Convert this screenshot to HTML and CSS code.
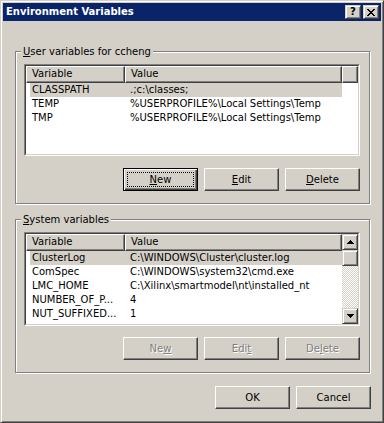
FILE: index.html
```html
<!DOCTYPE html>
<html>
<head>
<meta charset="utf-8">
<title>Environment Variables</title>
<link rel="stylesheet" href="styles.css">
</head>
<body>
<div class="window">
  <div class="titlebar">
    <span class="title">Environment Variables</span>
    <div class="caption-buttons">
      <button class="cbtn help">?</button>
      <button class="cbtn close"><svg width="8" height="7" viewBox="0 0 8 7" shape-rendering="crispEdges"><path d="M0 0h2v1H0zM6 0h2v1H6zM1 1h2v1H1zM5 1h2v1H5zM2 2h4v1H2zM3 3h2v1H3zM2 4h4v1H2zM1 5h2v1H1zM5 5h2v1H5zM0 6h2v1H0zM6 6h2v1H6z" fill="#000"/></svg></button>
    </div>
  </div>
  <div class="content">
    <section class="group g-user">
      <span class="legend"><u>U</u>ser variables for ccheng</span>
      <div class="listview lv-user">
        <div class="lv-inner">
          <div class="lv-main">
            <div class="lv-header">
              <div class="hcell c1">Variable</div>
              <div class="hcell c2">Value</div>
              <div class="hcell filler"></div>
            </div>
            <div class="row selected"><span class="cell c1">CLASSPATH</span><span class="cell c2">.;c:\classes;</span></div>
            <div class="row"><span class="cell c1">TEMP</span><span class="cell c2">%USERPROFILE%\Local Settings\Temp</span></div>
            <div class="row"><span class="cell c1">TMP</span><span class="cell c2">%USERPROFILE%\Local Settings\Temp</span></div>
          </div>
        </div>
      </div>
      <div class="btn-row">
        <button class="btn default"><u>N</u>ew</button>
        <button class="btn"><u>E</u>dit</button>
        <button class="btn"><u>D</u>elete</button>
      </div>
    </section>

    <section class="group g-system">
      <span class="legend"><u>S</u>ystem variables</span>
      <div class="listview lv-system">
        <div class="lv-inner">
          <div class="lv-main">
            <div class="lv-header">
              <div class="hcell c1">Variable</div>
              <div class="hcell c2">Value</div>
            </div>
            <div class="row selected"><span class="cell c1">ClusterLog</span><span class="cell c2">C:\WINDOWS\Cluster\cluster.log</span></div>
            <div class="row"><span class="cell c1">ComSpec</span><span class="cell c2">C:\WINDOWS\system32\cmd.exe</span></div>
            <div class="row"><span class="cell c1">LMC_HOME</span><span class="cell c2">C:\Xilinx\smartmodel\nt\installed_nt</span></div>
            <div class="row"><span class="cell c1">NUMBER_OF_P...</span><span class="cell c2">4</span></div>
            <div class="row"><span class="cell c1">NUT_SUFFIXED...</span><span class="cell c2">1</span></div>
          </div>
          <div class="scrollbar">
            <div class="sb-btn"><svg width="7" height="4" viewBox="0 0 7 4" shape-rendering="crispEdges"><path d="M3 0h1v1H3zM2 1h3v1H2zM1 2h5v1H1zM0 3h7v1H0z" fill="#000"/></svg></div>
            <div class="sb-thumb"></div>
            <div class="sb-track"></div>
            <div class="sb-btn"><svg width="7" height="4" viewBox="0 0 7 4" shape-rendering="crispEdges"><path d="M0 0h7v1H0zM1 1h5v1H1zM2 2h3v1H2zM3 3h1v1H3z" fill="#000"/></svg></div>
          </div>
        </div>
      </div>
      <div class="btn-row sys">
        <button class="btn" disabled>Ne<u>w</u></button>
        <button class="btn" disabled>Edi<u>t</u></button>
        <button class="btn" disabled>De<u>l</u>ete</button>
      </div>
    </section>

    <div class="dlg-buttons">
      <button class="btn">OK</button>
      <button class="btn">Cancel</button>
    </div>
  </div>
</div>
</body>
</html>
```

FILE: styles.css
```css
* { box-sizing: border-box; }
html, body { margin: 0; padding: 0; }
body {
  width: 384px;
  height: 423px;
  overflow: hidden;
  background: #d4d0c8;
  font: 10px "DejaVu Sans", Verdana, sans-serif;
  color: #000;
}
button { font: inherit; color: inherit; margin: 0; }

.window {
  width: 384px;
  height: 423px;
  border: 1px solid;
  border-color: #d4d0c8 #404040 #404040 #d4d0c8;
  box-shadow: inset 1px 1px 0 #fff, inset -1px -1px 0 #808080;
  padding: 2px;
  background: #d4d0c8;
  display: flex;
  flex-direction: column;
}

.titlebar {
  height: 18px;
  flex: none;
  background: #0a246a;
  display: flex;
  align-items: center;
  padding: 0 2px;
}
.title {
  flex: 1;
  color: #fff;
  font-weight: bold;
  line-height: 18px;
  padding-left: 1px;
  white-space: nowrap;
}
.caption-buttons { display: flex; gap: 2px; }
.cbtn {
  width: 16px;
  height: 14px;
  padding: 0;
  background: #d4d0c8;
  border: 1px solid;
  border-color: #d4d0c8 #404040 #404040 #d4d0c8;
  box-shadow: inset 1px 1px 0 #fff, inset -1px -1px 0 #808080;
  display: flex;
  align-items: center;
  justify-content: center;
}
.cbtn.help { font-weight: bold; font-size: 10px; line-height: 10px; padding-bottom: 1px; }
.cbtn.close svg { display: block; }

.content {
  flex: 1;
  padding: 30px 10px 11px 12px;
  display: flex;
  flex-direction: column;
}

.group {
  position: relative;
  width: 355px;
  border: 1px solid #808080;
  box-shadow: inset 1px 1px 0 #fff, 1px 1px 0 #fff;
  padding: 12px 9px 12px 8px;
  display: flex;
  flex-direction: column;
}
.g-system { margin-top: 15px; }
.legend {
  position: absolute;
  top: -7px;
  left: 5px;
  padding: 0 2px;
  background: #d4d0c8;
  line-height: 13px;
  white-space: nowrap;
}

.listview {
  width: 336px;
  border: 1px solid;
  border-color: #808080 #fff #fff #808080;
}
.lv-user { height: 92px; }
.lv-system { height: 94px; }
.lv-inner {
  height: 100%;
  border: 1px solid;
  border-color: #404040 #d4d0c8 #d4d0c8 #404040;
  background: #fff;
  display: flex;
  overflow: hidden;
}
.lv-main {
  flex: 1;
  min-width: 0;
  display: flex;
  flex-direction: column;
}
.lv-header { display: flex; height: 17px; flex: none; }
.hcell {
  height: 17px;
  background: #d4d0c8;
  border: 1px solid;
  border-color: #fff #404040 #404040 #fff;
  box-shadow: inset -1px -1px 0 #808080;
  line-height: 14px;
  padding-left: 5px;
  white-space: nowrap;
  overflow: hidden;
}
.hcell.c1 { width: 99px; flex: none; }
.hcell.c2 { width: 217px; flex: none; }
.hcell.filler { flex: 1; }

.row {
  display: flex;
  height: 14px;
  line-height: 14px;
  margin-left: 4px;
  width: 312px;
  flex: none;
}
.row.selected { background: #d4d0c8; }
.cell { white-space: nowrap; overflow: hidden; }
.cell.c1 { width: 95px; padding-left: 2px; flex: none; }
.cell.c2 { width: 217px; padding-left: 5px; flex: none; }

.scrollbar {
  width: 16px;
  flex: none;
  display: flex;
  flex-direction: column;
}
.sb-btn, .sb-thumb {
  height: 16px;
  flex: none;
  background: #d4d0c8;
  border: 1px solid;
  border-color: #d4d0c8 #404040 #404040 #d4d0c8;
  box-shadow: inset 1px 1px 0 #fff, inset -1px -1px 0 #808080;
  display: flex;
  align-items: center;
  justify-content: center;
}
.sb-btn svg { display: block; }
.sb-track {
  flex: 1;
  background: repeating-conic-gradient(#d4d0c8 0 25%, #fff 0 50%) 0 0 / 2px 2px;
}

.btn-row {
  display: flex;
  justify-content: flex-end;
  gap: 6px;
  margin-top: 12px;
}
.btn-row.sys { margin-top: 11px; }

.btn {
  width: 75px;
  height: 23px;
  padding: 0;
  background: #d4d0c8;
  border: 1px solid;
  border-color: #fff #404040 #404040 #fff;
  box-shadow: inset -1px -1px 0 #808080;
  text-align: center;
  line-height: 19px;
}
.btn.default {
  position: relative;
  border-color: #000;
  box-shadow: inset 1px 1px 0 #fff, inset -1px -1px 0 #404040, inset -2px -2px 0 #808080;
}
.btn.default::after {
  content: "";
  position: absolute;
  top: 3px; left: 3px; right: 3px; bottom: 3px;
  border: 1px dotted #000;
}
.btn:disabled {
  color: #808080;
  text-shadow: 1px 1px 0 #fff;
}

.dlg-buttons {
  display: flex;
  justify-content: flex-end;
  gap: 6px;
  margin-top: 13px;
}
```
